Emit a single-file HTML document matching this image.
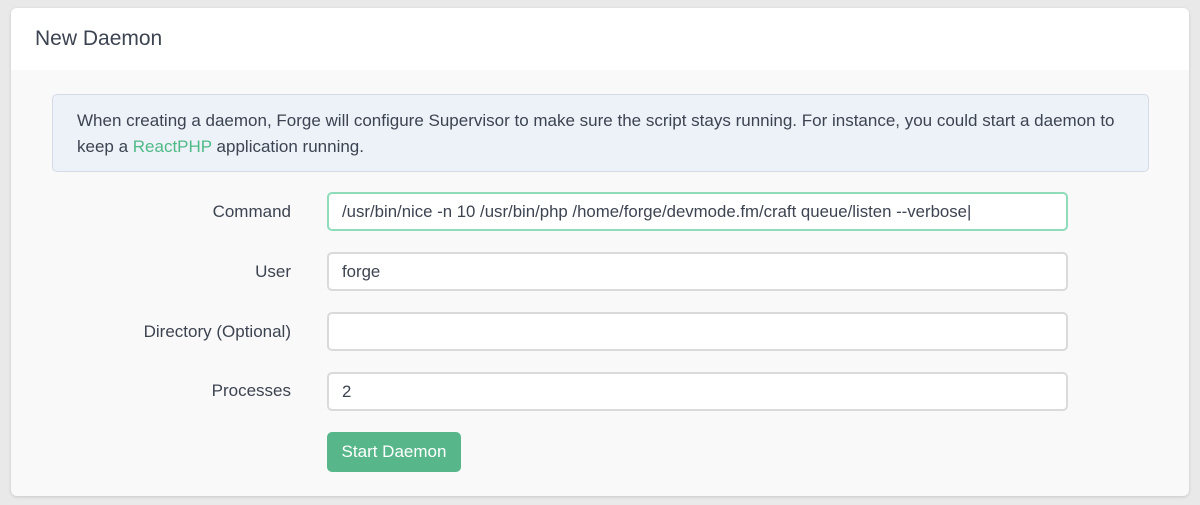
<!DOCTYPE html>
<html><head><style>
body{margin:0;background:#e9e9e9;font-family:"Liberation Sans",sans-serif;width:1200px;height:505px;overflow:hidden}
.card{position:absolute;left:11px;top:8px;width:1178px;height:488px;background:#f9f9f9;border-radius:6px;box-shadow:0 1px 3px rgba(0,0,0,.15);overflow:hidden}
.hd{height:62px;background:#fff;font-size:21px;color:#3d4451;padding-left:24px;line-height:62px}
.alert{position:absolute;left:41px;top:86px;width:1097px;height:78px;background:#edf1f8;border:1px solid #d5dbe6;border-radius:5px;box-sizing:border-box;padding:13px 0 0 24px;font-size:17px;line-height:26px;color:#3d4451}
.alert a{color:#4fba86;text-decoration:none}
.lbl{position:absolute;right:898px;font-size:17px;color:#3d4451}
.in{position:absolute;left:316px;width:741px;height:39px;background:#fff;border:2px solid #dadada;border-radius:5px;box-sizing:border-box;font-size:16.8px;color:#3d4451;padding-left:13px;line-height:35px}
.btn{position:absolute;left:316px;top:424px;width:134px;height:40px;background:#57b78a;border-radius:5px;color:#fff;font-size:17px;text-align:center;line-height:40px}
</style></head><body>
<div class="card">
<div class="hd">New Daemon</div>
<div class="alert">When creating a daemon, Forge will configure Supervisor to make sure the script stays running. For instance, you could start a daemon to keep a <a>ReactPHP</a> application running.</div>
<div class="lbl" style="top:194px">Command</div>
<div class="in" style="top:184px;border-color:#8fdcbb">/usr/bin/nice -n 10 /usr/bin/php /home/forge/devmode.fm/craft queue/listen --verbose|</div>
<div class="lbl" style="top:254px">User</div>
<div class="in" style="top:244px">forge</div>
<div class="lbl" style="top:314px">Directory (Optional)</div>
<div class="in" style="top:304px"></div>
<div class="lbl" style="top:373px">Processes</div>
<div class="in" style="top:364px">2</div>
<div class="btn">Start Daemon</div>
</div>
</body></html>
